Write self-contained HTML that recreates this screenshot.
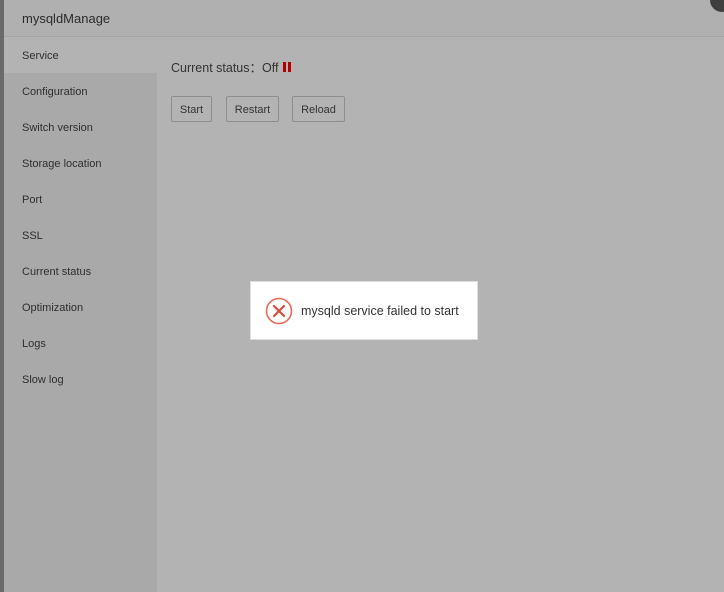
<!DOCTYPE html>
<html><head><style>
*{margin:0;padding:0;box-sizing:border-box}
body{width:724px;height:592px;overflow:hidden;background:#6a6a6a;font-family:"Liberation Sans",sans-serif;position:relative}
.win{position:absolute;left:4px;top:0;width:720px;height:592px;background:#b3b3b3}
.title{height:37px;border-bottom:1px solid #a4a4a4;background:#b0b0b0;font-size:13px;color:#2b2b2b;padding:11px 0 0 18px}
.side{position:absolute;left:0;top:37px;width:153px;bottom:0;background:#a9a9a9}
.side div{height:36px;line-height:38px;padding-left:18px;font-size:11px;color:#2e2e2e}
.side div.act{background:#b3b3b3}
.status{position:absolute;left:167px;top:61px;font-size:12.5px;color:#333;line-height:14px}
.bar{display:inline-block;width:3px;height:10px;background:#b00000;margin-left:2px;vertical-align:0px}
.btn{position:absolute;top:96px;height:26px;border:1px solid #8e8e8e;border-radius:2px;font-size:11px;color:#333;line-height:26px;text-align:center}
.toast{position:absolute;left:250px;top:281px;width:228px;height:59px;background:#fff;border:1px solid #ddd}
.toast span{position:absolute;left:50px;top:22px;font-size:12.5px;color:#333}
.close{position:absolute;left:710px;top:-12px;width:24px;height:24px;border-radius:50%;background:#3f3f3f}
</style></head><body>
<div class="win">
<div class="title">mysqldManage</div>
<div class="side">
<div class="act">Service</div><div>Configuration</div><div>Switch version</div><div>Storage location</div><div>Port</div><div>SSL</div><div>Current status</div><div>Optimization</div><div>Logs</div><div>Slow log</div>
</div>
<div class="status">Current status：Off<span class="bar" style="margin-left:5px"></span><span class="bar"></span></div>
<div class="btn" style="left:167px;width:41px">Start</div>
<div class="btn" style="left:222px;width:53px">Restart</div>
<div class="btn" style="left:288px;width:53px">Reload</div>
</div>
<div class="close"></div>
<div class="toast">
<svg style="position:absolute;left:14px;top:15px" width="28" height="28" viewBox="0 0 28 28"><circle cx="14" cy="14" r="12.5" fill="none" stroke="#e86a5a" stroke-width="1.6"/><path d="M9 9L19 19M19 9L9 19" stroke="#e04a3a" stroke-width="2.2" stroke-linecap="round"/></svg>
<span>mysqld service failed to start</span>
</div>
</body></html>
